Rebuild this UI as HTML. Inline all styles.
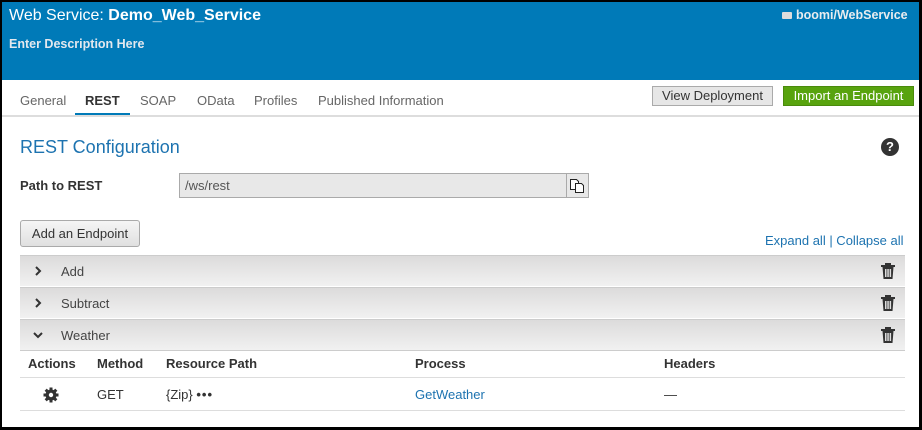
<!DOCTYPE html>
<html><head><meta charset="utf-8"><style>
*{box-sizing:border-box;margin:0;padding:0}
body{width:922px;height:430px;background:#000;font-family:"Liberation Sans",sans-serif;position:relative;overflow:hidden}
.page{position:absolute;left:2px;top:2px;width:917px;height:425px;background:#fff;overflow:hidden}
.hdr{position:absolute;left:0;top:0;width:917px;height:78px;background:#007ab8;color:#fff}
.abs{position:absolute;white-space:nowrap}
.tab{position:absolute;top:91px;font-size:13px;color:#666}
.btn{position:absolute;font-size:13px;text-align:center;line-height:18px}
.row{position:absolute;left:18px;width:885px;height:31px;background:linear-gradient(#dcdbdb,#f1f1f1);border-top:1px solid #ccc;font-size:13px;color:#444}
.row span{position:absolute;left:41px;top:8px}
.row .chev{position:absolute;left:14px;top:10px}
.trash{position:absolute;right:10px;top:7px}
.th{position:absolute;top:354px;font-size:13px;font-weight:bold;color:#333}
.td{position:absolute;top:385px;font-size:13px;color:#333}
</style></head><body><div class="page">
<div class="hdr">
<div class="abs" style="left:7px;top:5px;font-size:16px">Web Service: <b>Demo_Web_Service</b></div>
<div class="abs" style="left:7px;top:35px;font-size:12.5px;font-weight:bold;color:#e3e8ee">Enter Description Here</div>
<div class="abs" style="left:780px;top:6px;font-size:12.5px;font-weight:bold;color:#e8ecef"><span style="display:inline-block;width:10px;height:7px;background:#ddd;border-radius:1px;margin-right:4px"></span>boomi/WebService</div>
</div>
<div class="tab" style="left:18px">General</div>
<div class="tab" style="left:83px;color:#333;font-weight:bold">REST</div>
<div class="abs" style="left:73px;top:111px;width:55px;height:3px;background:#007ab8"></div>
<div class="tab" style="left:138px">SOAP</div>
<div class="tab" style="left:195px">OData</div>
<div class="tab" style="left:252px">Profiles</div>
<div class="tab" style="left:316px">Published Information</div>
<div class="btn" style="left:650px;top:84px;width:121px;height:20px;background:#e6e6e6;border:1px solid #aaa;color:#333">View Deployment</div>
<div class="btn" style="left:781px;top:84px;width:131px;height:20px;background:#58a30e;border:1px solid #4a8a0c;color:#fff">Import an Endpoint</div>
<div class="abs" style="left:0;top:113px;width:917px;height:2px;background:#ddd"></div>
<div class="abs" style="left:18px;top:135px;font-size:18px;color:#1d73b0">REST Configuration</div>
<div class="abs" style="left:879px;top:136px;width:18px;height:18px;border-radius:50%;background:#333;color:#fff;font-size:13px;font-weight:bold;text-align:center;line-height:18px">?</div>
<div class="abs" style="left:18px;top:176px;font-size:13px;font-weight:bold;color:#333">Path to REST</div>
<div class="abs" style="left:177px;top:171px;width:410px;height:25px;background:#e8e8e8;border:1px solid #aaa;font-size:13px;color:#555;padding:4px 0 0 5px">/ws/rest</div>
<div class="abs" style="left:564px;top:172px;width:1px;height:23px;background:#aaa"></div>
<svg class="abs" style="left:567px;top:176px" width="16" height="16" viewBox="0 0 16 16"><path d="M1.5 1.5h6l2 2v8h-8z" fill="#fff" stroke="#222"/><path d="M6.5 5.5h6l2 2v7h-8z" fill="#fff" stroke="#222"/></svg>
<div class="btn" style="left:18px;top:218px;width:120px;height:27px;background:linear-gradient(#f5f5f5,#e0e0e0);border:1px solid #aaa;border-radius:3px;color:#333;padding-top:4px">Add an Endpoint</div>
<div class="abs" style="left:763px;top:231px;font-size:13px;color:#1d73b0">Expand all | Collapse all</div>
<div class="row" style="top:253px"><svg class="chev" width="8" height="10" viewBox="0 0 8 10"><path d="M2 1l4 4-4 4" fill="none" stroke="#333" stroke-width="2"/></svg><span>Add</span><svg class="trash" width="14" height="16" viewBox="0 0 14 16"><rect x="0" y="2" width="14" height="2" fill="#333"/><rect x="4" y="0" width="6" height="3" fill="#333"/><path d="M1.5 4h11l-1 12h-9z" fill="#333"/><rect x="4" y="6" width="1.5" height="8" fill="#ddd"/><rect x="6.3" y="6" width="1.5" height="8" fill="#ddd"/><rect x="8.6" y="6" width="1.5" height="8" fill="#ddd"/></svg></div>
<div class="row" style="top:285px"><svg class="chev" width="8" height="10" viewBox="0 0 8 10"><path d="M2 1l4 4-4 4" fill="none" stroke="#333" stroke-width="2"/></svg><span>Subtract</span><svg class="trash" width="14" height="16" viewBox="0 0 14 16"><rect x="0" y="2" width="14" height="2" fill="#333"/><rect x="4" y="0" width="6" height="3" fill="#333"/><path d="M1.5 4h11l-1 12h-9z" fill="#333"/><rect x="4" y="6" width="1.5" height="8" fill="#ddd"/><rect x="6.3" y="6" width="1.5" height="8" fill="#ddd"/><rect x="8.6" y="6" width="1.5" height="8" fill="#ddd"/></svg></div>
<div class="row" style="top:317px;border-bottom:1px solid #ccc;height:32px"><svg class="chev" style="left:13px;top:11px" width="10" height="8" viewBox="0 0 10 8"><path d="M1 2l4 4 4-4" fill="none" stroke="#333" stroke-width="2"/></svg><span>Weather</span><svg class="trash" width="14" height="16" viewBox="0 0 14 16"><rect x="0" y="2" width="14" height="2" fill="#333"/><rect x="4" y="0" width="6" height="3" fill="#333"/><path d="M1.5 4h11l-1 12h-9z" fill="#333"/><rect x="4" y="6" width="1.5" height="8" fill="#ddd"/><rect x="6.3" y="6" width="1.5" height="8" fill="#ddd"/><rect x="8.6" y="6" width="1.5" height="8" fill="#ddd"/></svg></div>
<div class="th" style="left:26px">Actions</div>
<div class="th" style="left:95px">Method</div>
<div class="th" style="left:164px">Resource Path</div>
<div class="th" style="left:413px">Process</div>
<div class="th" style="left:662px">Headers</div>
<div class="abs" style="left:18px;top:375px;width:885px;height:1px;background:#ddd"></div>
<svg class="abs" style="left:41px;top:385px" width="16" height="16" viewBox="0 0 16 16"><g fill="#333"><circle cx="8" cy="8" r="5.5"/><rect x="6.5" y="0.5" width="3" height="15"/><rect x="0.5" y="6.5" width="15" height="3"/><rect x="6.5" y="0.5" width="3" height="15" transform="rotate(45 8 8)"/><rect x="6.5" y="0.5" width="3" height="15" transform="rotate(-45 8 8)"/></g><circle cx="8" cy="8" r="2.2" fill="#fff"/></svg>
<div class="td" style="left:95px">GET</div>
<div class="td" style="left:164px">{Zip} <b style="letter-spacing:1px">•••</b></div>
<div class="td" style="left:413px;color:#1d73b0">GetWeather</div>
<div class="td" style="left:662px">—</div>
<div class="abs" style="left:18px;top:408px;width:885px;height:1px;background:#ddd"></div>
</div></body></html>
